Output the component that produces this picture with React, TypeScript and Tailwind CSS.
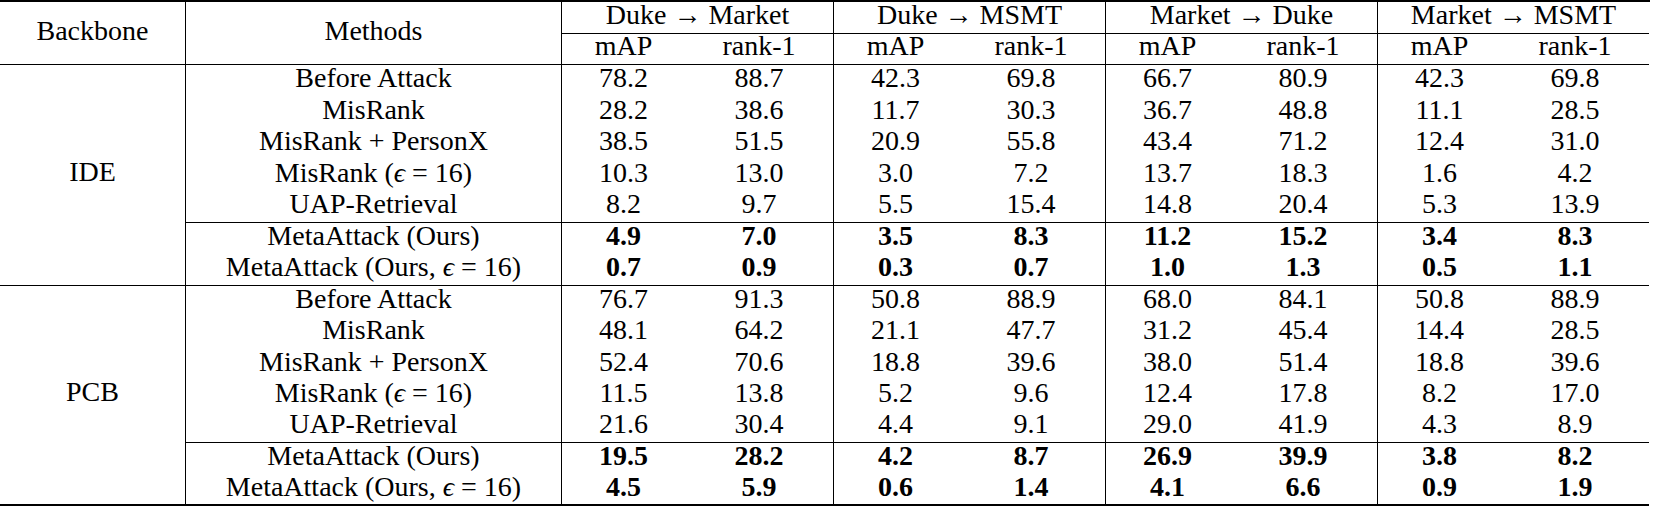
import { ReactNode } from "react";

type Row = { method: ReactNode; values: string[]; bold?: boolean; rule?: boolean };

const eps = <span className="italic">ϵ</span>;

const groups = ["Duke → Market", "Duke → MSMT", "Market → Duke", "Market → MSMT"];

const blocks: { backbone: string; rows: Row[] }[] = [
  {
    backbone: "IDE",
    rows: [
      { method: "Before Attack", values: ["78.2", "88.7", "42.3", "69.8", "66.7", "80.9", "42.3", "69.8"] },
      { method: "MisRank", values: ["28.2", "38.6", "11.7", "30.3", "36.7", "48.8", "11.1", "28.5"] },
      { method: "MisRank + PersonX", values: ["38.5", "51.5", "20.9", "55.8", "43.4", "71.2", "12.4", "31.0"] },
      { method: <>MisRank ({eps} = 16)</>, values: ["10.3", "13.0", "3.0", "7.2", "13.7", "18.3", "1.6", "4.2"] },
      { method: "UAP-Retrieval", values: ["8.2", "9.7", "5.5", "15.4", "14.8", "20.4", "5.3", "13.9"], rule: true },
      { method: "MetaAttack (Ours)", values: ["4.9", "7.0", "3.5", "8.3", "11.2", "15.2", "3.4", "8.3"], bold: true },
      {
        method: <>MetaAttack (Ours, {eps} = 16)</>,
        values: ["0.7", "0.9", "0.3", "0.7", "1.0", "1.3", "0.5", "1.1"],
        bold: true,
        rule: true,
      },
    ],
  },
  {
    backbone: "PCB",
    rows: [
      { method: "Before Attack", values: ["76.7", "91.3", "50.8", "88.9", "68.0", "84.1", "50.8", "88.9"] },
      { method: "MisRank", values: ["48.1", "64.2", "21.1", "47.7", "31.2", "45.4", "14.4", "28.5"] },
      { method: "MisRank + PersonX", values: ["52.4", "70.6", "18.8", "39.6", "38.0", "51.4", "18.8", "39.6"] },
      { method: <>MisRank ({eps} = 16)</>, values: ["11.5", "13.8", "5.2", "9.6", "12.4", "17.8", "8.2", "17.0"] },
      { method: "UAP-Retrieval", values: ["21.6", "30.4", "4.4", "9.1", "29.0", "41.9", "4.3", "8.9"], rule: true },
      { method: "MetaAttack (Ours)", values: ["19.5", "28.2", "4.2", "8.7", "26.9", "39.9", "3.8", "8.2"], bold: true },
      {
        method: <>MetaAttack (Ours, {eps} = 16)</>,
        values: ["4.5", "5.9", "0.6", "1.4", "4.1", "6.6", "0.9", "1.9"],
        bold: true,
        rule: true,
      },
    ],
  },
];

// each cell centres its text a touch above the middle, like the LaTeX rows
const cell = "flex items-center justify-center whitespace-pre border-black pb-[5px]";

export default function App() {
  return (
    <div className="min-h-screen bg-white">
      <div className="w-[1650px] border-t-2 border-black [font-family:'Liberation_Serif','Times_New_Roman',serif] text-[28px] leading-none text-black">
        <div className="grid grid-cols-[185px_376px_124px_148px_124px_148px_124px_148px_124px_148px] grid-rows-[repeat(16,31.5px)]">
          <div className={`${cell} row-span-2 border-b`}>Backbone</div>
          <div className={`${cell} row-span-2 border-b border-l`}>Methods</div>
          {groups.map((g) => (
            <div key={g} className={`${cell} col-span-2 border-b border-l`}>
              <span>{g}</span>
            </div>
          ))}
          {groups.map((g) => [
            <div key={g + "m"} className={`${cell} border-b border-l`}>
              mAP
            </div>,
            <div key={g + "r"} className={`${cell} border-b`}>
              rank-1
            </div>,
          ])}

          {blocks.map((block, b) => {
            const last = b === blocks.length - 1;
            return [
              <div key={block.backbone} className={`${cell} row-span-7 ${last ? "border-b-2" : "border-b"}`}>
                {block.backbone}
              </div>,
              block.rows.map((row, i) => {
                const rule = row.rule ? (last && i === block.rows.length - 1 ? "border-b-2" : "border-b") : "";
                return [
                  <div key={block.backbone + i + "m"} className={`${cell} border-l ${rule}`}>
                    <span>{row.method}</span>
                  </div>,
                  row.values.map((v, j) => (
                    <div
                      key={block.backbone + i + "v" + j}
                      className={`${cell} ${j % 2 === 0 ? "border-l" : ""} ${rule} ${row.bold ? "font-bold" : ""}`}
                    >
                      {v}
                    </div>
                  )),
                ];
              }),
            ];
          })}
        </div>
      </div>
    </div>
  );
}
